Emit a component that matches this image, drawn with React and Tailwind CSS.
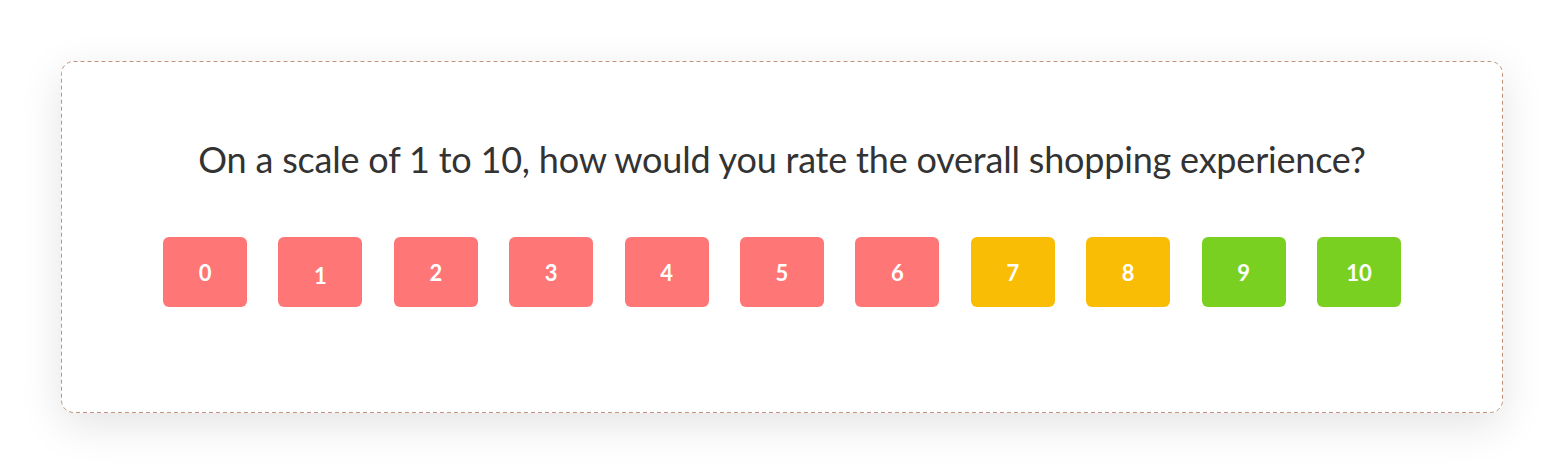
import React from 'react'

const scores = [
    { n: 0, tone: 'red' },
    { n: 1, tone: 'red' },
    { n: 2, tone: 'red' },
    { n: 3, tone: 'red' },
    { n: 4, tone: 'red' },
    { n: 5, tone: 'red' },
    { n: 6, tone: 'red' },
    { n: 7, tone: 'yellow' },
    { n: 8, tone: 'yellow' },
    { n: 9, tone: 'green' },
    { n: 10, tone: 'green' },
]

const toneClass = {
    red: 'bg-[#ff7676]',
    yellow: 'bg-[#fabd05]',
    green: 'bg-[#79d021]',
}

// dashed outline drawn with svg so the dash length matches (4 on / 3 off)
function DashedOutline() {
    return (
        <svg className="absolute inset-0 w-full h-full pointer-events-none" aria-hidden="true">
            <rect
                x="0.5"
                y="0.5"
                width="calc(100% - 1px)"
                height="calc(100% - 1px)"
                rx="12"
                fill="none"
                stroke="#c0927a"
                strokeWidth="1"
                strokeDasharray="4 3"
            />
        </svg>
    )
}

export default function App() {
    return (
        <div className="min-h-[475px] bg-white px-[61px] pt-[61px] font-['Lato','Liberation_Sans',sans-serif]">
            <div className="relative h-[352px] rounded-[12px] bg-white shadow-[0_12px_44px_rgba(0,0,0,0.11)] flex flex-col items-center pt-[74px]">
                <DashedOutline />
                <h1 className="text-[36px] leading-[48px] text-[#333333] tracking-[-0.2px]">
                    On a scale of 1 to 10, how would you rate the overall shopping experience?
                </h1>
                <div className="mt-[54px] flex gap-[31.4px]">
                    {scores.map(s => (
                        <button
                            key={s.n}
                            className={`w-[84px] h-[70px] rounded-[6px] ${toneClass[s.tone]} text-white font-bold text-[22px] flex items-center justify-center`}
                        >
                            <span className={s.n === 1 ? 'translate-y-[3px]' : ''}>{s.n}</span>
                        </button>
                    ))}
                </div>
            </div>
        </div>
    )
}
